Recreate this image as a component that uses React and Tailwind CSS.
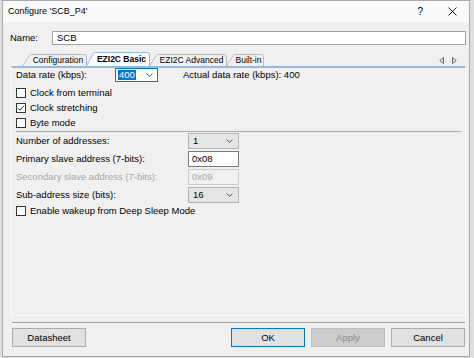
import React from 'react';

const Check = ({ checked }) => (
    <span className="w-[10px] h-[10px] border border-[#333] bg-white flex items-center justify-center shrink-0">
        {checked && (
            <svg width="8" height="8" viewBox="0 0 8 8">
                <path d="M1 4.2 L3 6.2 L7 1.6" stroke="#222" strokeWidth="1" fill="none" />
            </svg>
        )}
    </span>
);

const Chevron = () => (
    <svg width="7" height="4" viewBox="0 0 7 4" className="shrink-0">
        <path d="M0.5 0.5 L3.5 3.3 L6.5 0.5" stroke="#555" strokeWidth="1" fill="none" />
    </svg>
);

// tab outline: slanted left edge, rounded top-right corner
const TabShape = ({ w, h, active }) => (
    <svg width={w} height={h} viewBox={`0 0 ${w} ${h}`} className="absolute left-0 top-0">
        <path
            d={`M0.5 ${h} L7.5 1.2 Q8.2 0.5 9.2 0.5 L${w - 3} 0.5 Q${w - 0.5} 0.5 ${w - 0.5} 3 L${w - 0.5} ${h}`}
            fill={active ? '#fbfdff' : '#f0f0f0'}
            stroke={active ? '#8fbbe6' : '#b7b7b7'}
            strokeWidth="1"
        />
    </svg>
);

const Tab = ({ label, active, w, className }) => (
    <div className={`relative flex items-center ${className}`}>
        <TabShape w={w} h={active ? 14 : 12} active={active} />
        <span className={`relative w-full text-center pl-[7px] text-[8.5px] ${active ? 'font-bold' : ''}`}>{label}</span>
    </div>
);

const Dropdown = ({ value }) => (
    <div className="w-[51px] h-[16px] border border-[#b3b3b3] bg-[#e5e5e5] flex items-center justify-between pl-[4px] pr-[5px]">
        <span>{value}</span>
        <Chevron />
    </div>
);

const FieldRow = ({ label, disabled, children }) => (
    <div className="flex items-center h-[16px]">
        <span className={`w-[172px] ${disabled ? 'text-[#a6a6a6]' : ''}`}>{label}</span>
        {children}
    </div>
);

const CheckRow = ({ label, checked, className = '' }) => (
    <div className={`flex items-center gap-[4px] h-[15px] ${className}`}>
        <Check checked={checked} />
        <span>{label}</span>
    </div>
);

const Button = ({ label, className = '' }) => (
    <div className={`h-[19px] flex items-center justify-center border ${className}`}>{label}</div>
);

export default function App() {
    return (
        <div className="w-[474px] h-[358px] bg-[#dedede] font-['Liberation_Sans',Arial,sans-serif] text-[9.5px] leading-none text-black">
            <div className="ml-[2px] w-[468px] h-[357px] border border-[#a9a9a9] bg-[#f0f0f0] flex flex-col">
                {/* title bar */}
                <div className="h-[21px] bg-[#fafafa] flex items-center pl-[5px] pr-[12px]">
                    <span className="flex-1 text-[9px]">Configure 'SCB_P4'</span>
                    <span className="mr-[25px] text-[10px]">?</span>
                    <svg width="9" height="9" viewBox="0 0 9 9">
                        <path d="M0.5 0.5 L8.5 8.5 M8.5 0.5 L0.5 8.5" stroke="#222" strokeWidth="1" />
                    </svg>
                </div>

                {/* name */}
                <div className="flex items-center h-[14px] mt-[9px] pl-[7px] pr-[3px]">
                    <span className="w-[42px]">Name:</span>
                    <div className="flex-1 h-[14px] border border-[#a0a0a0] bg-white flex items-center pl-[4px]">SCB</div>
                </div>

                {/* tabs */}
                <div className="flex items-end h-[14px] mt-[7px] pl-[19px] pr-[12px]">
                    <Tab label="Configuration" w={65} className="w-[65px] h-[12px]" />
                    <Tab label="EZI2C Basic" w={64} active className="w-[64px] h-[14px] -ml-[1px]" />
                    <Tab label="EZI2C Advanced" w={78} className="w-[78px] h-[12px] -ml-[1px]" />
                    <Tab label="Built-in" w={38} className="w-[38px] h-[12px] -ml-[1px]" />
                    <div className="flex-1" />
                    <div className="flex items-center gap-[8px] h-[12px] text-[#666]">
                        <svg width="5" height="7" viewBox="0 0 5 7"><path d="M4.5 0.5 L0.8 3.5 L4.5 6.5 Z" fill="none" stroke="#666" /></svg>
                        <svg width="5" height="7" viewBox="0 0 5 7"><path d="M0.5 0.5 L4.2 3.5 L0.5 6.5 Z" fill="none" stroke="#666" /></svg>
                    </div>
                </div>

                {/* tab panel */}
                <div className="ml-[8px] mr-[3px] h-[250px] border-t-2 border-t-[#8fbbe6] border-x border-b border-x-[#fbfbfb] border-b-[#fbfbfb] pl-[4px] pr-[3px] flex flex-col">
                    <div className="flex items-center h-[14px]">
                        <span className="w-[99px]">Data rate (kbps):</span>
                        <div className="w-[43px] h-[14px] border border-[#0078d7] bg-white flex items-center justify-between pl-[2px] pr-[4px]">
                            <span className="bg-[#0078d7] text-white px-[1px]">400</span>
                            <Chevron />
                        </div>
                        <span className="ml-[25px]">Actual data rate (kbps): 400</span>
                    </div>

                    <CheckRow label="Clock from terminal" className="mt-[3px]" />
                    <CheckRow label="Clock stretching" checked />
                    <CheckRow label="Byte mode" />

                    <div className="h-[1px] bg-[#a8a8a8] mt-[1px] mr-[1px]" />

                    <div className="flex flex-col gap-[2px] mt-[1px]">
                        <FieldRow label="Number of addresses:">
                            <Dropdown value="1" />
                        </FieldRow>
                        <FieldRow label="Primary slave address (7-bits):">
                            <div className="w-[51px] h-[16px] border border-[#7a7a7a] bg-white flex items-center pl-[3px]">0x08</div>
                        </FieldRow>
                        <FieldRow label="Secondary slave address (7-bits):" disabled>
                            <div className="w-[51px] h-[16px] border border-[#cccccc] bg-[#f0f0f0] text-[#a6a6a6] flex items-center pl-[3px]">0x09</div>
                        </FieldRow>
                        <FieldRow label="Sub-address size (bits):">
                            <Dropdown value="16" />
                        </FieldRow>
                    </div>

                    <CheckRow label="Enable wakeup from Deep Sleep Mode" />
                </div>

                {/* separator */}
                <div className="h-[1px] bg-[#a0a0a0] mt-[6px] ml-[9px] mr-[4px]" />

                {/* buttons */}
                <div className="flex items-center mt-[5px] pl-[9px] pr-[4px]">
                    <Button label="Datasheet" className="w-[74px] bg-[#e1e1e1] border-[#adadad]" />
                    <div className="flex-1" />
                    <div className="flex gap-[6px]">
                        <Button label="OK" className="w-[74px] bg-[#e1e1e1] border-[#0078d7]" />
                        <Button label="Apply" className="w-[74px] bg-[#cccccc] border-[#bfbfbf] text-[#8a8a8a]" />
                        <Button label="Cancel" className="w-[74px] bg-[#e1e1e1] border-[#adadad]" />
                    </div>
                </div>
            </div>
        </div>
    );
}
